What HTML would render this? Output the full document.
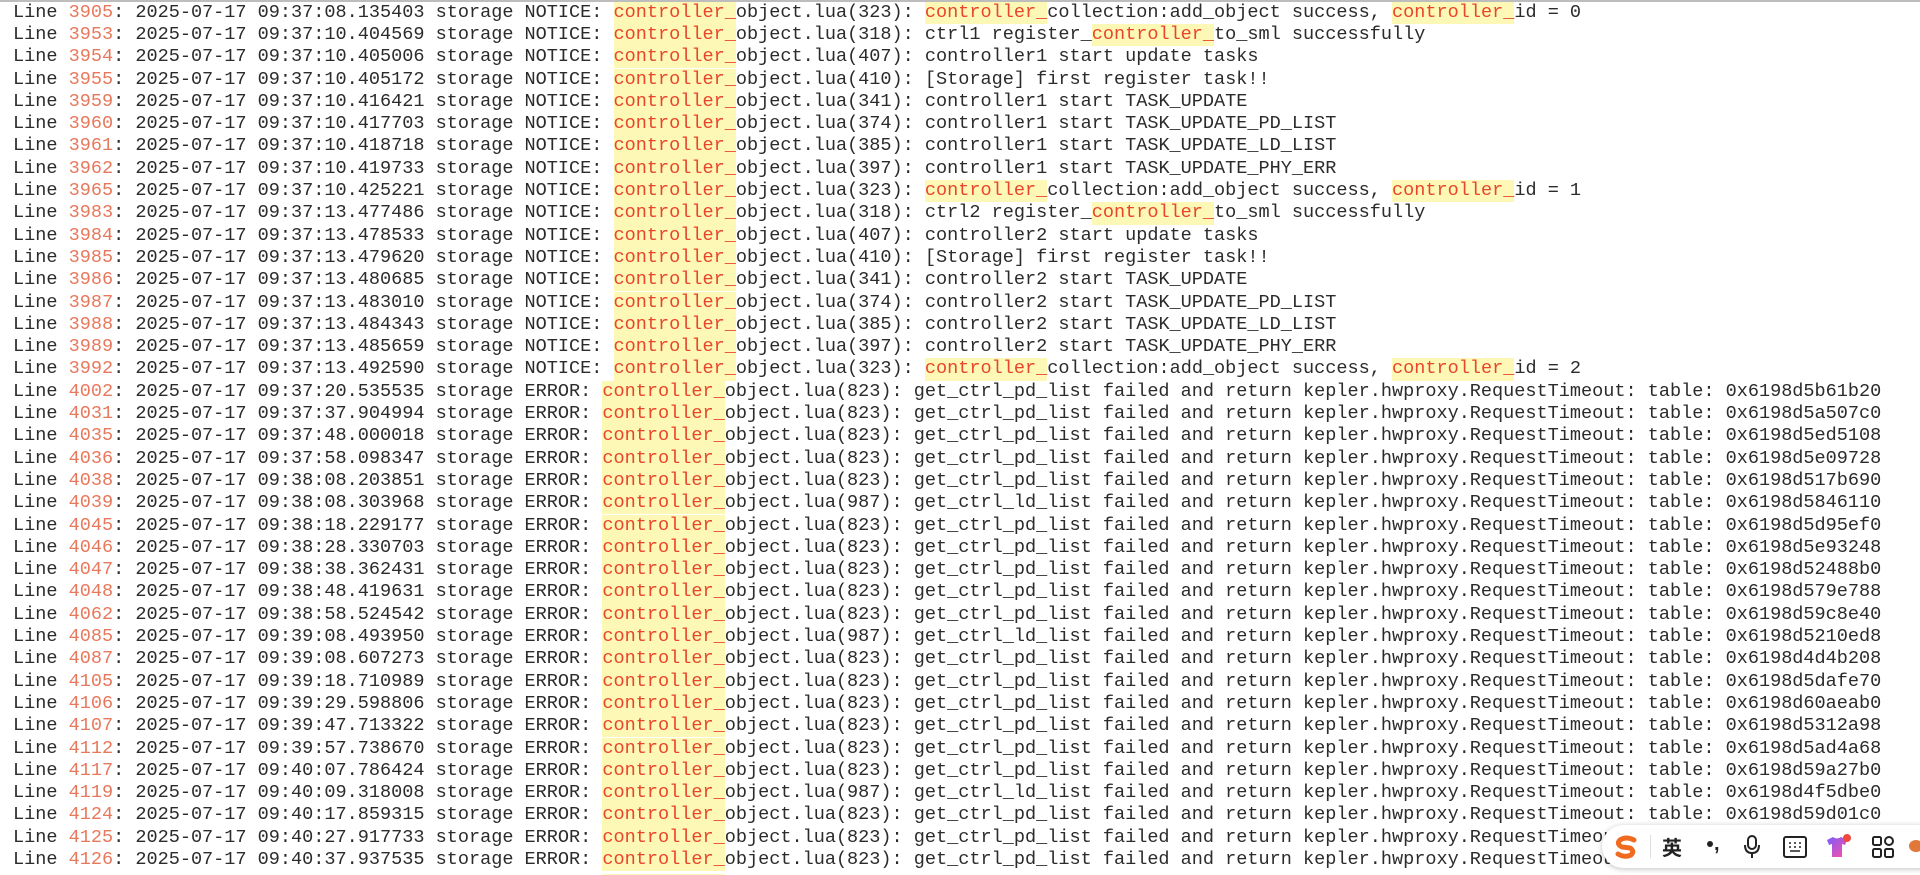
<!DOCTYPE html>
<html><head><meta charset="utf-8"><style>
html,body{margin:0;padding:0;background:#fff;width:1920px;height:875px;overflow:hidden;position:relative}
.top{position:absolute;left:0;top:0;width:1920px;height:2px;background:#bdbdbd}
.r{position:absolute;left:13px;height:22.3px;line-height:22.3px;white-space:pre;font-family:"Liberation Mono",monospace;font-size:18.55px;color:#2b2b2b}
.n{color:#e8785c}
.h{background:#fdf8b6;color:#e8452c;display:inline-block;height:22.3px}
.ime{position:absolute;left:1602px;top:825px;width:340px;height:43px;background:#fff;border-radius:22px;box-shadow:0 1px 6px rgba(0,0,0,.25);z-index:5}
.ime div{position:absolute}
</style></head><body>
<div class="top"></div>
<div class="r" style="top:1.6px">Line <span class="n">3905</span>: 2025-07-17 09:37:08.135403 storage NOTICE: <span class="h">controller_</span>object.lua(323): <span class="h">controller_</span>collection:add_object success, <span class="h">controller_</span>id = 0</div>
<div class="r" style="top:23.9px">Line <span class="n">3953</span>: 2025-07-17 09:37:10.404569 storage NOTICE: <span class="h">controller_</span>object.lua(318): ctrl1 register_<span class="h">controller_</span>to_sml successfully</div>
<div class="r" style="top:46.2px">Line <span class="n">3954</span>: 2025-07-17 09:37:10.405006 storage NOTICE: <span class="h">controller_</span>object.lua(407): controller1 start update tasks</div>
<div class="r" style="top:68.5px">Line <span class="n">3955</span>: 2025-07-17 09:37:10.405172 storage NOTICE: <span class="h">controller_</span>object.lua(410): [Storage] first register task!!</div>
<div class="r" style="top:90.8px">Line <span class="n">3959</span>: 2025-07-17 09:37:10.416421 storage NOTICE: <span class="h">controller_</span>object.lua(341): controller1 start TASK_UPDATE</div>
<div class="r" style="top:113.1px">Line <span class="n">3960</span>: 2025-07-17 09:37:10.417703 storage NOTICE: <span class="h">controller_</span>object.lua(374): controller1 start TASK_UPDATE_PD_LIST</div>
<div class="r" style="top:135.4px">Line <span class="n">3961</span>: 2025-07-17 09:37:10.418718 storage NOTICE: <span class="h">controller_</span>object.lua(385): controller1 start TASK_UPDATE_LD_LIST</div>
<div class="r" style="top:157.7px">Line <span class="n">3962</span>: 2025-07-17 09:37:10.419733 storage NOTICE: <span class="h">controller_</span>object.lua(397): controller1 start TASK_UPDATE_PHY_ERR</div>
<div class="r" style="top:180.0px">Line <span class="n">3965</span>: 2025-07-17 09:37:10.425221 storage NOTICE: <span class="h">controller_</span>object.lua(323): <span class="h">controller_</span>collection:add_object success, <span class="h">controller_</span>id = 1</div>
<div class="r" style="top:202.3px">Line <span class="n">3983</span>: 2025-07-17 09:37:13.477486 storage NOTICE: <span class="h">controller_</span>object.lua(318): ctrl2 register_<span class="h">controller_</span>to_sml successfully</div>
<div class="r" style="top:224.6px">Line <span class="n">3984</span>: 2025-07-17 09:37:13.478533 storage NOTICE: <span class="h">controller_</span>object.lua(407): controller2 start update tasks</div>
<div class="r" style="top:246.9px">Line <span class="n">3985</span>: 2025-07-17 09:37:13.479620 storage NOTICE: <span class="h">controller_</span>object.lua(410): [Storage] first register task!!</div>
<div class="r" style="top:269.2px">Line <span class="n">3986</span>: 2025-07-17 09:37:13.480685 storage NOTICE: <span class="h">controller_</span>object.lua(341): controller2 start TASK_UPDATE</div>
<div class="r" style="top:291.5px">Line <span class="n">3987</span>: 2025-07-17 09:37:13.483010 storage NOTICE: <span class="h">controller_</span>object.lua(374): controller2 start TASK_UPDATE_PD_LIST</div>
<div class="r" style="top:313.8px">Line <span class="n">3988</span>: 2025-07-17 09:37:13.484343 storage NOTICE: <span class="h">controller_</span>object.lua(385): controller2 start TASK_UPDATE_LD_LIST</div>
<div class="r" style="top:336.1px">Line <span class="n">3989</span>: 2025-07-17 09:37:13.485659 storage NOTICE: <span class="h">controller_</span>object.lua(397): controller2 start TASK_UPDATE_PHY_ERR</div>
<div class="r" style="top:358.4px">Line <span class="n">3992</span>: 2025-07-17 09:37:13.492590 storage NOTICE: <span class="h">controller_</span>object.lua(323): <span class="h">controller_</span>collection:add_object success, <span class="h">controller_</span>id = 2</div>
<div class="r" style="top:380.7px">Line <span class="n">4002</span>: 2025-07-17 09:37:20.535535 storage ERROR: <span class="h">controller_</span>object.lua(823): get_ctrl_pd_list failed and return kepler.hwproxy.RequestTimeout: table: 0x6198d5b61b20</div>
<div class="r" style="top:403.0px">Line <span class="n">4031</span>: 2025-07-17 09:37:37.904994 storage ERROR: <span class="h">controller_</span>object.lua(823): get_ctrl_pd_list failed and return kepler.hwproxy.RequestTimeout: table: 0x6198d5a507c0</div>
<div class="r" style="top:425.3px">Line <span class="n">4035</span>: 2025-07-17 09:37:48.000018 storage ERROR: <span class="h">controller_</span>object.lua(823): get_ctrl_pd_list failed and return kepler.hwproxy.RequestTimeout: table: 0x6198d5ed5108</div>
<div class="r" style="top:447.6px">Line <span class="n">4036</span>: 2025-07-17 09:37:58.098347 storage ERROR: <span class="h">controller_</span>object.lua(823): get_ctrl_pd_list failed and return kepler.hwproxy.RequestTimeout: table: 0x6198d5e09728</div>
<div class="r" style="top:469.9px">Line <span class="n">4038</span>: 2025-07-17 09:38:08.203851 storage ERROR: <span class="h">controller_</span>object.lua(823): get_ctrl_pd_list failed and return kepler.hwproxy.RequestTimeout: table: 0x6198d517b690</div>
<div class="r" style="top:492.2px">Line <span class="n">4039</span>: 2025-07-17 09:38:08.303968 storage ERROR: <span class="h">controller_</span>object.lua(987): get_ctrl_ld_list failed and return kepler.hwproxy.RequestTimeout: table: 0x6198d5846110</div>
<div class="r" style="top:514.5px">Line <span class="n">4045</span>: 2025-07-17 09:38:18.229177 storage ERROR: <span class="h">controller_</span>object.lua(823): get_ctrl_pd_list failed and return kepler.hwproxy.RequestTimeout: table: 0x6198d5d95ef0</div>
<div class="r" style="top:536.8px">Line <span class="n">4046</span>: 2025-07-17 09:38:28.330703 storage ERROR: <span class="h">controller_</span>object.lua(823): get_ctrl_pd_list failed and return kepler.hwproxy.RequestTimeout: table: 0x6198d5e93248</div>
<div class="r" style="top:559.1px">Line <span class="n">4047</span>: 2025-07-17 09:38:38.362431 storage ERROR: <span class="h">controller_</span>object.lua(823): get_ctrl_pd_list failed and return kepler.hwproxy.RequestTimeout: table: 0x6198d52488b0</div>
<div class="r" style="top:581.4px">Line <span class="n">4048</span>: 2025-07-17 09:38:48.419631 storage ERROR: <span class="h">controller_</span>object.lua(823): get_ctrl_pd_list failed and return kepler.hwproxy.RequestTimeout: table: 0x6198d579e788</div>
<div class="r" style="top:603.7px">Line <span class="n">4062</span>: 2025-07-17 09:38:58.524542 storage ERROR: <span class="h">controller_</span>object.lua(823): get_ctrl_pd_list failed and return kepler.hwproxy.RequestTimeout: table: 0x6198d59c8e40</div>
<div class="r" style="top:626.0px">Line <span class="n">4085</span>: 2025-07-17 09:39:08.493950 storage ERROR: <span class="h">controller_</span>object.lua(987): get_ctrl_ld_list failed and return kepler.hwproxy.RequestTimeout: table: 0x6198d5210ed8</div>
<div class="r" style="top:648.3px">Line <span class="n">4087</span>: 2025-07-17 09:39:08.607273 storage ERROR: <span class="h">controller_</span>object.lua(823): get_ctrl_pd_list failed and return kepler.hwproxy.RequestTimeout: table: 0x6198d4d4b208</div>
<div class="r" style="top:670.6px">Line <span class="n">4105</span>: 2025-07-17 09:39:18.710989 storage ERROR: <span class="h">controller_</span>object.lua(823): get_ctrl_pd_list failed and return kepler.hwproxy.RequestTimeout: table: 0x6198d5dafe70</div>
<div class="r" style="top:692.9px">Line <span class="n">4106</span>: 2025-07-17 09:39:29.598806 storage ERROR: <span class="h">controller_</span>object.lua(823): get_ctrl_pd_list failed and return kepler.hwproxy.RequestTimeout: table: 0x6198d60aeab0</div>
<div class="r" style="top:715.2px">Line <span class="n">4107</span>: 2025-07-17 09:39:47.713322 storage ERROR: <span class="h">controller_</span>object.lua(823): get_ctrl_pd_list failed and return kepler.hwproxy.RequestTimeout: table: 0x6198d5312a98</div>
<div class="r" style="top:737.5px">Line <span class="n">4112</span>: 2025-07-17 09:39:57.738670 storage ERROR: <span class="h">controller_</span>object.lua(823): get_ctrl_pd_list failed and return kepler.hwproxy.RequestTimeout: table: 0x6198d5ad4a68</div>
<div class="r" style="top:759.8px">Line <span class="n">4117</span>: 2025-07-17 09:40:07.786424 storage ERROR: <span class="h">controller_</span>object.lua(823): get_ctrl_pd_list failed and return kepler.hwproxy.RequestTimeout: table: 0x6198d59a27b0</div>
<div class="r" style="top:782.1px">Line <span class="n">4119</span>: 2025-07-17 09:40:09.318008 storage ERROR: <span class="h">controller_</span>object.lua(987): get_ctrl_ld_list failed and return kepler.hwproxy.RequestTimeout: table: 0x6198d4f5dbe0</div>
<div class="r" style="top:804.4px">Line <span class="n">4124</span>: 2025-07-17 09:40:17.859315 storage ERROR: <span class="h">controller_</span>object.lua(823): get_ctrl_pd_list failed and return kepler.hwproxy.RequestTimeout: table: 0x6198d59d01c0</div>
<div class="r" style="top:826.7px">Line <span class="n">4125</span>: 2025-07-17 09:40:27.917733 storage ERROR: <span class="h">controller_</span>object.lua(823): get_ctrl_pd_list failed and return kepler.hwproxy.RequestTimeout: table: 0x6198d5b2c1a0</div>
<div class="r" style="top:849.0px">Line <span class="n">4126</span>: 2025-07-17 09:40:37.937535 storage ERROR: <span class="h">controller_</span>object.lua(823): get_ctrl_pd_list failed and return kepler.hwproxy.RequestTimeout: table: 0x6198d5c3e8f0</div>
<div class="r" style="top:874px">Line <span class="n">4131</span>: 2025-07-17 09:40:47.957240 storage ERROR: <span class="h">controller_</span>object.lua(823): get_ctrl_pd_list failed and return kepler.hwproxy.RequestTimeout: table: 0x6198d5a11c48</div>

<div class="ime">
  <svg style="position:absolute;left:10px;top:8px" width="28" height="28" viewBox="0 0 28 28"><path d="M22 7 Q14 3 8 7 Q4 11 10 14 L18 15 Q23 18 19 22 Q13 25 6 21" fill="none" stroke="#f06a1f" stroke-width="5" stroke-linecap="round"/></svg>
  <div style="left:48px;top:10px;width:1px;height:23px;background:#ddd"></div>
  <div style="left:60px;top:7px;font:bold 20px 'Noto Sans CJK SC',sans-serif;color:#222">英</div>
  <div style="left:105px;top:16px;width:6px;height:6px;border-radius:50%;background:#222"></div>
  <div style="left:112px;top:8px;font:bold 20px 'Liberation Sans',sans-serif;color:#222">,</div>
  <svg style="position:absolute;left:140px;top:9px" width="20" height="26" viewBox="0 0 20 26"><rect x="6" y="2" width="8" height="13" rx="4" fill="none" stroke="#222" stroke-width="2"/><path d="M3 11 Q3 19 10 19 Q17 19 17 11 M10 19 V24" fill="none" stroke="#222" stroke-width="2"/></svg>
  <svg style="position:absolute;left:181px;top:11px" width="24" height="22" viewBox="0 0 24 22"><rect x="1" y="1" width="22" height="20" rx="2" fill="none" stroke="#222" stroke-width="2"/><path d="M6 7h2M11 7h2M16 7h2M6 11h2M11 11h2M16 11h2M7 15h10" stroke="#222" stroke-width="1.6"/></svg>
  <svg style="position:absolute;left:222px;top:8px" width="28" height="28" viewBox="0 0 28 28"><defs><linearGradient id="g" x1="0" y1="0" x2="1" y2="1"><stop offset="0" stop-color="#7b5cff"/><stop offset="1" stop-color="#ff4fa0"/></linearGradient></defs><path d="M3 7 L9 4 Q13 7 17 4 L23 7 L21 12 L18 11 L18 24 L8 24 L8 11 L5 12 Z" fill="url(#g)"/><circle cx="23" cy="5" r="4" fill="#f04a3a"/></svg>
  <svg style="position:absolute;left:270px;top:11px" width="22" height="22" viewBox="0 0 22 22"><rect x="1" y="1" width="8" height="8" rx="1.5" fill="none" stroke="#222" stroke-width="2"/><circle cx="17" cy="5" r="4" fill="none" stroke="#222" stroke-width="2"/><rect x="1" y="13" width="8" height="8" rx="1.5" fill="none" stroke="#222" stroke-width="2"/><rect x="13" y="13" width="8" height="8" rx="1.5" fill="none" stroke="#222" stroke-width="2"/></svg>
  <div style="left:307px;top:15px;width:14px;height:12px;border-radius:50%;background:#e0783a"></div>
</div>
</body></html>
